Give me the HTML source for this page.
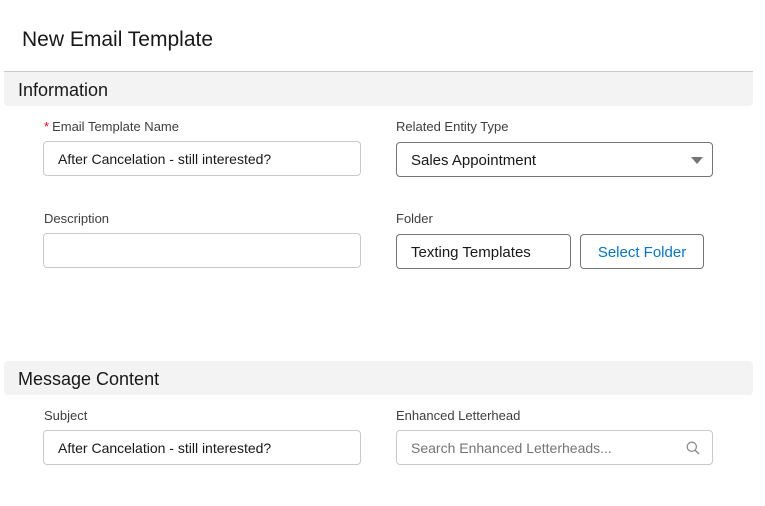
<!DOCTYPE html>
<html><head><meta charset="utf-8"><style>
*{box-sizing:border-box;margin:0;padding:0}
body{width:765px;height:506px;background:#fff;font-family:"Liberation Sans",sans-serif;color:#181818;position:relative;overflow:hidden}
.a{position:absolute}
.title{left:22px;top:28px;font-size:21px;color:#181818}
.rule{left:4px;top:71px;width:749px;height:1px;background:#c9c9c9}
.sec{left:4px;width:749px;height:34px;background:#f3f3f3;border-radius:0 0 4px 4px;font-size:18px;padding:8px 0 0 14px;color:#181818}
.lbl{font-size:13px;color:#3e3e3e}
.in{border:1px solid #c9c9c9;border-radius:4px;height:35px;font-size:14px;padding:9px 0 0 14px;background:#fff}
.dk{border-color:#747474}
.req{color:#ea001e;margin-right:3px}
</style></head><body>
<div class="a title">New Email Template</div>
<div class="a rule"></div>
<div class="a sec" style="top:72px">Information</div>
<div class="a lbl" style="left:44px;top:119px"><span class="req">*</span>Email Template Name</div>
<div class="a in" style="left:43px;top:141px;width:318px">After Cancelation - still interested?</div>
<div class="a lbl" style="left:396px;top:119px">Related Entity Type</div>
<div class="a in dk" style="left:396px;top:142px;width:317px;font-size:15px">Sales Appointment
<div class="a" style="right:9px;top:14px;width:0;height:0;border-left:6px solid transparent;border-right:6px solid transparent;border-top:7px solid #747474"></div></div>
<div class="a lbl" style="left:44px;top:211px">Description</div>
<div class="a in" style="left:43px;top:233px;width:318px"></div>
<div class="a lbl" style="left:396px;top:211px">Folder</div>
<div class="a in dk" style="left:396px;top:234px;width:175px;font-size:15px">Texting Templates</div>
<div class="a in dk" style="left:580px;top:234px;width:124px;font-size:15px;color:#0176d3;padding:9px 0 0 0;text-align:center">Select Folder</div>
<div class="a sec" style="top:361px;border-radius:4px">Message Content</div>
<div class="a lbl" style="left:44px;top:408px">Subject</div>
<div class="a in" style="left:43px;top:430px;width:318px">After Cancelation - still interested?</div>
<div class="a lbl" style="left:396px;top:408px">Enhanced Letterhead</div>
<div class="a in" style="left:396px;top:430px;width:317px;color:#747474">Search Enhanced Letterheads...
<svg class="a" style="right:12px;top:10px" width="14" height="14" viewBox="0 0 14 14"><circle cx="5.8" cy="5.8" r="4.6" fill="none" stroke="#8c8c8c" stroke-width="1.3"/><path d="M9.2 9.2L13 13" stroke="#8c8c8c" stroke-width="1.4"/></svg></div>
</body></html>
